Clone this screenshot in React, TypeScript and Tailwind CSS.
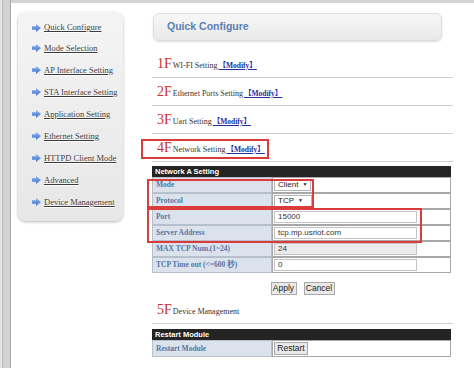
import React from "react";

const serif = "font-['Liberation_Serif','Noto_Sans_CJK_SC',serif]";
const sans = "font-['Liberation_Sans',Arial,sans-serif]";

function Arrow() {
  return (
    <svg width="9" height="8" viewBox="0 0 9 8" className="mr-[3px] shrink-0">
      <defs>
        <linearGradient id="ar" x1="0" y1="0" x2="0" y2="1">
          <stop offset="0" stopColor="#8fb6ee" />
          <stop offset="1" stopColor="#3c72cc" />
        </linearGradient>
      </defs>
      <polygon points="0,2.3 4,2.3 4,0 9,4 4,8 4,5.7 0,5.7" fill="url(#ar)" />
    </svg>
  );
}

const menu = [
  "Quick Configure",
  "Mode Selection",
  "AP Interface Setting",
  "STA Interface Setting",
  "Application Setting",
  "Ethernet Setting",
  "HTTPD Client Mode",
  "Advanced",
  "Device Management",
];

function StepRow({ n, label, modify = true, boxed = false }: { n: string; label: string; modify?: boolean; boxed?: boolean }) {
  return (
    <div className="relative flex h-[28px] items-center border-b border-[#cfcfcf] pl-[5px] pt-[2px]">
      {boxed && (
        <div className="absolute left-[-11px] top-[5px] h-[20px] w-[128px] border-2 border-[#dc3b3b]" />
      )}
      <div className={`flex items-baseline ${serif}`}>
        <span className="text-[14px] leading-none text-[#c9302c]">{n}</span>
        <span className="ml-[1px] text-[8px] text-[#333]">{label}</span>
        {modify && (
          <span className="ml-[1px] text-[7.5px] font-bold text-[#24309a] underline">【Modify】</span>
        )}
      </div>
    </div>
  );
}

function Row({ label, children }: { label: string; children?: React.ReactNode }) {
  return (
    <div className="flex h-[16px]">
      <div className={`flex w-[120px] items-center border border-[#b6c0cc] bg-[#dbe2eb] pl-[3px] text-[7.5px] font-bold text-[#5676a6] ${serif}`}>
        {label}
      </div>
      <div className="flex flex-1 items-center border border-[#a8a8a8] bg-white pl-[1px]">{children}</div>
    </div>
  );
}

function Input({ value, gray = false }: { value: string; gray?: boolean }) {
  return (
    <div
      className={`flex h-[12px] w-[143px] items-center border border-[#c4c4c4] pl-[3px] text-[8px] text-[#333] ${sans} ${gray ? "bg-[#ebebeb]" : "bg-white"}`}
    >
      {value}
    </div>
  );
}

function Select({ value, w }: { value: string; w: string }) {
  return (
    <div className={`flex h-[12px] ${w} items-center border border-[#b4b4b4] bg-white pl-[3px] text-[8px] text-[#222] ${sans}`}>
      {value}
      <span className="ml-[4px] text-[5px]">▼</span>
    </div>
  );
}

function Btn({ children, w }: { children: React.ReactNode; w: string }) {
  return (
    <div className={`flex h-[13px] ${w} items-center justify-center border border-[#a9a9a9] bg-[#e9e9e9] text-[8.5px] text-[#222] ${sans}`}>
      {children}
    </div>
  );
}

export default function App() {
  return (
    <div className="flex h-[368px] w-[474px] overflow-hidden bg-white">
      <div className="flex h-full w-[11px] shrink-0">
        <div className="w-[2px] bg-[#e4e4e4]" />
        <div className="w-[1px] bg-[#b9b9b9]" />
        <div className="w-[7px] bg-[#d2d2d2]" />
        <div className="w-[1px] bg-[#a9a9a9]" />
      </div>
      <div className="flex flex-1 flex-col">
        <div className="h-[3px] w-full bg-[#d4d4d4]" />
        <div className="flex">
          <nav className="ml-[7px] mt-[9px] h-[209px] w-[105px] shrink-0 rounded-[8px] bg-gradient-to-b from-[#f4f4f4] to-[#e7e7e7] pt-[6px] shadow-[0_1px_3px_rgba(0,0,0,0.3)]">
            {menu.map((m, i) => (
              <div key={m} className={`flex items-center pl-[14px] ${i === 0 ? "h-[19px]" : "h-[22px]"}`}>
                <Arrow />
                <span className={`text-[8.5px] text-[#3a3a3a] underline [text-shadow:0_1px_0_#fff] ${serif}`}>{m}</span>
              </div>
            ))}
          </nav>
          <main className="ml-[18px] w-[315px]">
            <div className="ml-[12px] mt-[10px] flex h-[28px] w-[289px] items-center rounded-[6px] border border-[#dedede] bg-gradient-to-b from-[#f7f7f7] to-[#e9e9e9] pl-[13px] shadow-[0_1px_2px_rgba(0,0,0,0.15)]">
              <span className={`text-[10.5px] font-bold text-[#5a81b2] ${sans}`}>Quick Configure</span>
            </div>
            <div className="ml-[11px] mt-[9px] w-[301px]">
              <StepRow n="1F" label="WI-FI Setting" />
              <StepRow n="2F" label="Ethernet Ports Setting" />
              <StepRow n="3F" label="Uart Setting" />
              <StepRow n="4F" label="Network Setting" boxed />

              <div className="relative mt-[4px] w-[299px]">
                <div className={`flex h-[11px] items-center bg-[#242424] pl-[3px] text-[7.5px] font-bold text-white ${sans}`}>
                  Network A Setting
                </div>
                <Row label="Mode">
                  <Select value="Client" w="w-[37px]" />
                </Row>
                <Row label="Protocol">
                  <Select value="TCP" w="w-[38px]" />
                </Row>
                <Row label="Port">
                  <Input value="15000" />
                </Row>
                <Row label="Server Address">
                  <Input value="tcp.mp.usriot.com" />
                </Row>
                <Row label="MAX TCP Num.(1~24)">
                  <Input value="24" gray />
                </Row>
                <Row label="TCP Time out (<=600 秒)">
                  <Input value="0" />
                </Row>
                <div className="absolute left-[-5px] top-[13px] h-[29px] w-[167px] border-2 border-[#dc3b3b]" />
                <div className="absolute left-[-5px] top-[42px] h-[35px] w-[275px] border-2 border-[#dc3b3b]" />
              </div>

              <div className="mt-[9px] flex w-[299px] justify-center gap-[7px] pl-[2px]">
                <Btn w="w-[26px]">Apply</Btn>
                <Btn w="w-[31px]">Cancel</Btn>
              </div>

              <div className="mt-[1px]">
                <StepRow n="5F" label="Device Management" modify={false} />
              </div>

              <div className="mt-[5px] w-[299px]">
                <div className={`flex h-[11px] items-center bg-[#242424] pl-[3px] text-[7.5px] font-bold text-white ${sans}`}>
                  Restart Module
                </div>
                <div className="flex h-[17px]">
                  <div className={`flex w-[120px] items-center border border-[#b6c0cc] bg-[#dbe2eb] pl-[3px] text-[7.5px] font-bold text-[#5676a6] ${serif}`}>
                    Restart Module
                  </div>
                  <div className="flex flex-1 items-center border border-[#a8a8a8] bg-white pl-[1px]">
                    <Btn w="w-[34px]">Restart</Btn>
                  </div>
                </div>
              </div>
            </div>
          </main>
        </div>
      </div>
    </div>
  );
}
